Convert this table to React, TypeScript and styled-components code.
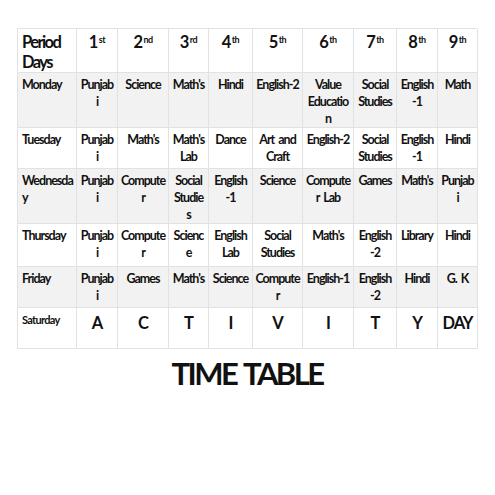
import React from 'react';
import styled, { createGlobalStyle } from 'styled-components';

const GlobalStyle = createGlobalStyle`
  html, body {
    margin: 0;
    padding: 0;
    background: #ffffff;
  }
  body {
    font-family: Lato, "Noto Sans", sans-serif;
    color: #111;
  }
`;

const Page = styled.div`
  width: 495px;
  height: 495px;
  padding: 28px 0 0 17px;
  box-sizing: border-box;
  display: flex;
  flex-direction: column;
`;

const Grid = styled.div`
  display: grid;
  width: 460px;
  grid-template-columns: 59px 41px 51px 40px 44px 50px 51px 43px 41px 40px;
  grid-template-rows: 44px 55px 41px 55px 43px 41px 41px;
  border-top: 1px solid #e2e2e2;
  border-left: 1px solid #e2e2e2;
  box-sizing: border-box;
`;

const Cell = styled.div<{ $shaded?: boolean; $first?: boolean }>`
  box-sizing: border-box;
  border-right: 1px solid #e2e2e2;
  border-bottom: 1px solid #e2e2e2;
  background: ${(p) => (p.$shaded ? '#f2f2f2' : '#ffffff')};
  padding: 3px ${(p) => (p.$first ? '0 0 4px' : '0 0 0')};
  text-align: ${(p) => (p.$first ? 'left' : 'center')};
  font-size: 12.5px;
  line-height: 17px;
  font-weight: 700;
  letter-spacing: -1px;
  word-spacing: 2px;
  white-space: pre-line;
  overflow: hidden;
`;

const HeadCell = styled(Cell)`
  padding-top: 3px;
  font-size: 16.5px;
  line-height: 20px;
  letter-spacing: -1.6px;
`;

const Sup = styled.sup`
  font-size: 9px;
  vertical-align: top;
  position: relative;
  top: -2px;
  margin-left: 2px;
  letter-spacing: -0.5px;
`;

const SatLabel = styled(Cell)`
  font-size: 11px;
  letter-spacing: -0.7px;
`;

const SatCell = styled(Cell)`
  padding-top: 5px;
  font-size: 16.5px;
  line-height: 20px;
  letter-spacing: -1px;
`;

const Title = styled.h1`
  margin: 6px 0 0;
  width: 460px;
  text-align: center;
  font-size: 31px;
  line-height: 36px;
  font-weight: 700;
  letter-spacing: -2.6px;
  word-spacing: 3px;
  color: #111;
`;

const periods = ['1', '2', '3', '4', '5', '6', '7', '8', '9'];
const suffix = (n: string) => (n === '1' ? 'st' : n === '2' ? 'nd' : n === '3' ? 'rd' : 'th');

const days: { day: string; slots: string[] }[] = [
  {
    day: 'Monday',
    slots: ['Punjab\ni', 'Science', "Math's", 'Hindi', 'English-2', 'Value\nEducatio\nn', 'Social\nStudies', 'English\n-1', 'Math'],
  },
  {
    day: 'Tuesday',
    slots: ['Punjab\ni', "Math's", "Math's\nLab", 'Dance', 'Art and\nCraft', 'English-2', 'Social\nStudies', 'English\n-1', 'Hindi'],
  },
  {
    day: 'Wednesda\ny',
    slots: ['Punjab\ni', 'Compute\nr', 'Social\nStudie\ns', 'English\n-1', 'Science', 'Compute\nr Lab', 'Games', "Math's", 'Punjab\ni'],
  },
  {
    day: 'Thursday',
    slots: ['Punjab\ni', 'Compute\nr', 'Scienc\ne', 'English\nLab', 'Social\nStudies', "Math's", 'English\n-2', 'Library', 'Hindi'],
  },
  {
    day: 'Friday',
    slots: ['Punjab\ni', 'Games', "Math's", 'Science', 'Compute\nr', 'English-1', 'English\n-2', 'Hindi', 'G. K'],
  },
];

const activity = ['A', 'C', 'T', 'I', 'V', 'I', 'T', 'Y', 'DAY'];

const App: React.FC = () => {
  return (
    <Page>
      <GlobalStyle />
      <Grid>
        <HeadCell $first>{'Period\nDays'}</HeadCell>
        {periods.map((n) => (
          <HeadCell key={n}>
            {n}
            <Sup>{suffix(n)}</Sup>
          </HeadCell>
        ))}

        {days.map((d, i) => (
          <React.Fragment key={d.day}>
            <Cell $first $shaded={i % 2 === 0}>{d.day}</Cell>
            {d.slots.map((s, j) => (
              <Cell key={j} $shaded={i % 2 === 0}>{s}</Cell>
            ))}
          </React.Fragment>
        ))}

        <SatLabel $first>Saturday</SatLabel>
        {activity.map((a, j) => (
          <SatCell key={j}>{a}</SatCell>
        ))}
      </Grid>
      <Title>TIME TABLE</Title>
    </Page>
  );
};

export default App;
